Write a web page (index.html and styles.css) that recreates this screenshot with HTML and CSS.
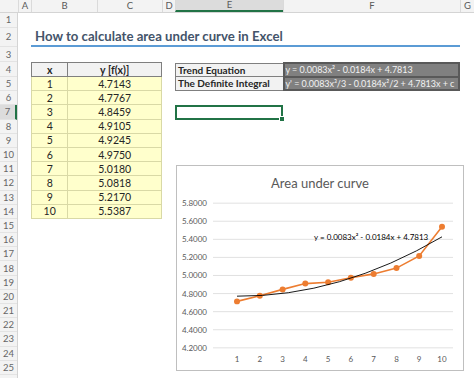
FILE: index.html
```html
<!DOCTYPE html>
<html lang="en">
<head>
    <meta charset="UTF-8">
    <title>How to calculate area under curve in Excel</title>
    <link rel="stylesheet" href="styles.css">
</head>
<body>
    <div class="excel">
        <div class="colbar">
            <div class="corner"></div>
            <div class="ch">A</div>
            <div class="ch">B</div>
            <div class="ch">C</div>
            <div class="ch">D</div>
            <div class="ch active">E</div>
            <div class="ch">F</div>
            <div class="ch">G</div>
        </div>

        <div class="main">
            <div class="rowbar">
                <div class="rh">1</div>
                <div class="rh">2</div>
                <div class="rh">3</div>
                <div class="rh">4</div>
                <div class="rh">5</div>
                <div class="rh">6</div>
                <div class="rh active">7</div>
                <div class="rh">8</div>
                <div class="rh">9</div>
                <div class="rh">10</div>
                <div class="rh">11</div>
                <div class="rh">12</div>
                <div class="rh">13</div>
                <div class="rh">14</div>
                <div class="rh">15</div>
                <div class="rh">16</div>
                <div class="rh">17</div>
                <div class="rh">18</div>
                <div class="rh">19</div>
                <div class="rh">20</div>
                <div class="rh">21</div>
                <div class="rh">22</div>
                <div class="rh">23</div>
                <div class="rh">24</div>
                <div class="rh">25</div>
            </div>

            <div class="sheet">
                <h1 class="title">How to calculate area under curve in Excel</h1>

                <table class="data">
                    <tr><th>x</th><th>y [f(x)]</th></tr>
                    <tr><td>1</td><td>4.7143</td></tr>
                    <tr><td>2</td><td>4.7767</td></tr>
                    <tr><td>3</td><td>4.8459</td></tr>
                    <tr><td>4</td><td>4.9105</td></tr>
                    <tr><td>5</td><td>4.9245</td></tr>
                    <tr><td>6</td><td>4.9750</td></tr>
                    <tr><td>7</td><td>5.0180</td></tr>
                    <tr><td>8</td><td>5.0818</td></tr>
                    <tr><td>9</td><td>5.2170</td></tr>
                    <tr><td>10</td><td>5.5387</td></tr>
                </table>

                <table class="eq">
                    <colgroup><col class="col-e"><col></colgroup>
                    <tr>
                        <td class="label">Trend Equation</td>
                        <td class="value">y = 0.0083x² - 0.0184x + 4.7813</td>
                    </tr>
                    <tr>
                        <td class="label">The Definite Integral</td>
                        <td class="value">y' = 0.0083x³/3 - 0.0184x²/2 + 4.7813x + c</td>
                    </tr>
                </table>

                <div class="selected"><span class="handle"></span></div>

                <div class="chart">
                    <svg viewBox="177 166 286 204" preserveAspectRatio="none">
                        <text class="chart-title" x="320" y="188">Area under curve</text>

                        <g class="grid">
                            <line x1="213" y1="203.2" x2="453" y2="203.2"/>
                            <line x1="213" y1="221.3" x2="453" y2="221.3"/>
                            <line x1="213" y1="239.4" x2="453" y2="239.4"/>
                            <line x1="213" y1="257.5" x2="453" y2="257.5"/>
                            <line x1="213" y1="275.6" x2="453" y2="275.6"/>
                            <line x1="213" y1="293.7" x2="453" y2="293.7"/>
                            <line x1="213" y1="311.8" x2="453" y2="311.8"/>
                            <line x1="213" y1="329.9" x2="453" y2="329.9"/>
                            <line x1="213" y1="348" x2="453" y2="348"/>
                        </g>

                        <g class="ylabels">
                            <text x="207" y="206">5.8000</text>
                            <text x="207" y="224">5.6000</text>
                            <text x="207" y="242">5.4000</text>
                            <text x="207" y="260">5.2000</text>
                            <text x="207" y="278">5.0000</text>
                            <text x="207" y="297">4.8000</text>
                            <text x="207" y="315">4.6000</text>
                            <text x="207" y="333">4.4000</text>
                            <text x="207" y="351">4.2000</text>
                        </g>

                        <g class="xlabels">
                            <text x="237" y="362">1</text>
                            <text x="259.8" y="362">2</text>
                            <text x="282.6" y="362">3</text>
                            <text x="305.3" y="362">4</text>
                            <text x="328.1" y="362">5</text>
                            <text x="350.9" y="362">6</text>
                            <text x="373.7" y="362">7</text>
                            <text x="396.5" y="362">8</text>
                            <text x="419.2" y="362">9</text>
                            <text x="442" y="362">10</text>
                        </g>

                        <polyline class="series" points="237,301.5 259.8,295.8 282.6,289.5 305.3,283.7 328.1,282.4 350.9,277.9 373.7,274 396.5,268.2 419.2,256 442,226.9"/>
                        <g class="markers">
                            <circle cx="237" cy="301.5" r="3"/>
                            <circle cx="259.8" cy="295.8" r="3"/>
                            <circle cx="282.6" cy="289.5" r="3"/>
                            <circle cx="305.3" cy="283.7" r="3"/>
                            <circle cx="328.1" cy="282.4" r="3"/>
                            <circle cx="350.9" cy="277.9" r="3"/>
                            <circle cx="373.7" cy="274" r="3"/>
                            <circle cx="396.5" cy="268.2" r="3"/>
                            <circle cx="419.2" cy="256" r="3"/>
                            <circle cx="442" cy="226.9" r="3"/>
                        </g>

                        <!-- quadratic trendline, exact as a bezier -->
                        <path class="trend" d="M237,296.3 Q339.5,297 442,236.9"/>
                        <text class="trend-label" x="314" y="240">y = 0.0083x² - 0.0184x + 4.7813</text>
                    </svg>
                </div>
            </div>
        </div>
    </div>
</body>
</html>
```

FILE: styles.css
```css
:root {
    --cols: 13px 66px 65px 13px 108px 177px 1fr;
    --rows: 14.5px 19.5px 15px 15px repeat(21, 14.2px) 1fr;
}

html, body {
    margin: 0;
    height: 100%;
    overflow: hidden;
}

body {
    font-family: 'Lato', 'Liberation Sans', sans-serif;
    background-color: #fff;
    color: #262626;
}

.excel {
    display: flex;
    flex-direction: column;
    height: 100%;
}

/* column letters */
.colbar {
    display: grid;
    grid-template-columns: 18px var(--cols);
    height: 13px;
    flex: none;
    background-color: #f3f3f3;
    border-bottom: 1px solid #d4d4d4;
    box-sizing: border-box;
}

.ch {
    font-size: 9.5px;
    line-height: 12px;
    text-align: center;
    color: #595959;
    border-left: 1px solid #dadada;
}

.ch.active {
    background-color: #dcdcdc;
    border-bottom: 2px solid #217346;
    line-height: 10px;
}

.main {
    display: flex;
    flex: 1;
    min-height: 0;
}

/* row numbers */
.rowbar {
    display: grid;
    grid-template-rows: var(--rows);
    width: 18px;
    flex: none;
    background-color: #f3f3f3;
    border-right: 1px solid #d4d4d4;
    box-sizing: border-box;
}

.rh {
    display: flex;
    align-items: center;
    justify-content: center;
    font-size: 9.5px;
    color: #666;
    border-bottom: 1px solid #e3e3e3;
    box-sizing: border-box;
}

.rh.active {
    background-color: #dcdcdc;
    border-right: 2px solid #217346;
}

.sheet {
    flex: 1;
    display: grid;
    grid-template-columns: var(--cols);
    grid-template-rows: var(--rows);
}

.title {
    grid-column: 2 / 7;
    grid-row: 2;
    margin: 0;
    padding: 0 0 1px 4px;
    display: flex;
    align-items: flex-end;
    font-size: 13.2px;
    font-weight: bold;
    color: #44546a;
    border-bottom: 2px solid #5b9bd5;
}

/* x / y table */
.data {
    grid-column: 2 / 4;
    grid-row: 4 / 15;
    width: 100%;
    height: 100%;
    border-collapse: collapse;
    font-size: 10.5px;
}

.data th {
    background-color: #f2f2f2;
    border: 1px solid #7f7f7f;
    font-weight: bold;
    height: 13px;
    padding: 0;
}

.data td {
    background-color: #ffffcc;
    border: 1px solid #d9d9a6;
    text-align: center;
    padding: 0;
}

/* equations */
.eq {
    grid-column: 5 / 7;
    grid-row: 4 / 6;
    width: 100%;
    height: 100%;
    table-layout: fixed;
    border-collapse: collapse;
    font-size: 10px;
}

.eq .col-e {
    width: 108px;
}

.eq td {
    padding: 0 2px;
    white-space: nowrap;
}

.eq .label {
    font-weight: bold;
    background-color: #f2f2f2;
    border: 1px solid #7f7f7f;
}

.eq .value {
    padding: 0 1px;
    background-color: #808080;
    color: #f2f2f2;
    font-size: 9px;
    letter-spacing: -0.05px;
    border: 2px solid #595959;
}

/* active cell E7 */
.selected {
    grid-column: 5;
    grid-row: 7;
    position: relative;
    border: 2px solid #217346;
}

.handle {
    position: absolute;
    right: -4px;
    bottom: -4px;
    width: 4px;
    height: 4px;
    background-color: #217346;
    border: 1px solid #fff;
}

/* chart */
.chart {
    grid-column: 5 / 8;
    grid-row: 11 / 26;
    margin: 3px 10px 4px 1px;
    border: 1px solid #bfbfbf;
    background-color: #fff;
}

.chart svg {
    display: block;
    width: 100%;
    height: 100%;
    font-family: 'Lato', 'Liberation Sans', sans-serif;
}

.chart-title {
    font-size: 13px;
    fill: #595959;
    text-anchor: middle;
}

.grid line {
    stroke: #d9d9d9;
    stroke-width: 0.8;
}

.ylabels text {
    font-size: 8px;
    fill: #595959;
    text-anchor: end;
}

.xlabels text {
    font-size: 8px;
    fill: #595959;
    text-anchor: middle;
}

.series {
    fill: none;
    stroke: #ed7d31;
    stroke-width: 1.6;
}

.markers circle {
    fill: #ed7d31;
}

.trend {
    fill: none;
    stroke: #000;
    stroke-width: 0.9;
}

.trend-label {
    font-size: 8px;
    fill: #000;
}
```
